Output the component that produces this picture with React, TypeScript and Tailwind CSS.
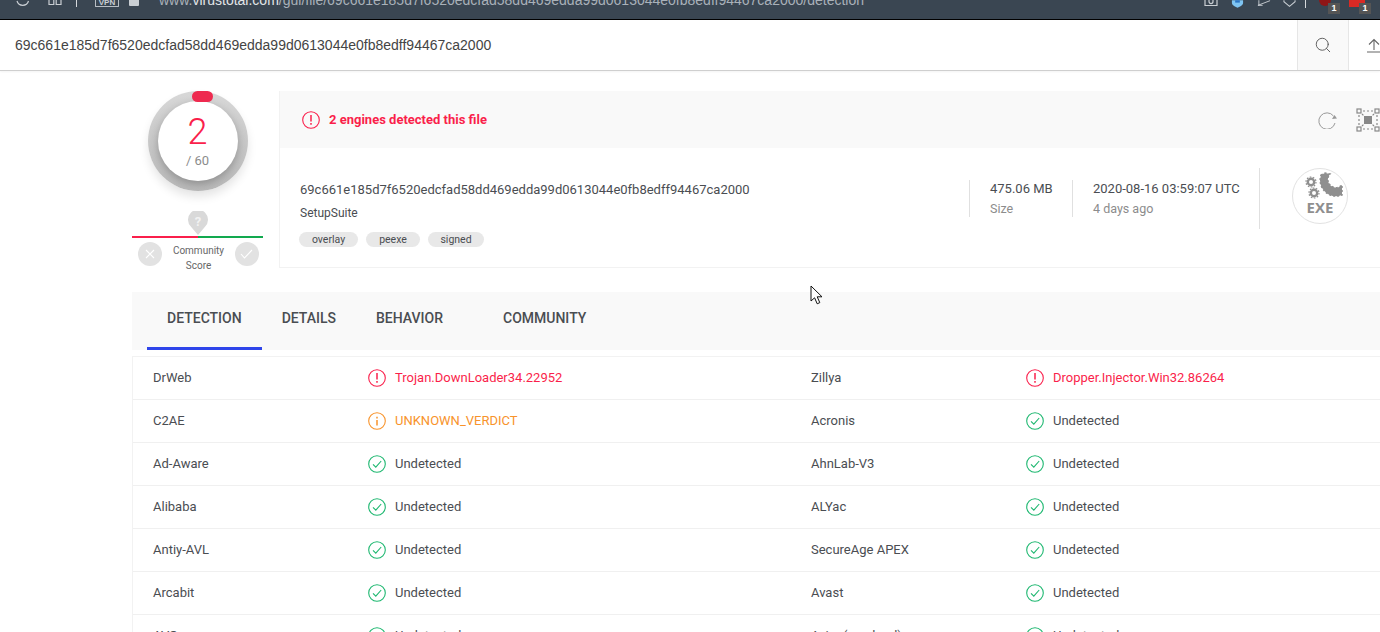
import React from "react";
import { Search } from "lucide-react";

const rows = [
  ["DrWeb", "bad", "Trojan.DownLoader34.22952", "Zillya", "bad", "Dropper.Injector.Win32.86264"],
  ["C2AE", "warn", "UNKNOWN_VERDICT", "Acronis", "ok", "Undetected"],
  ["Ad-Aware", "ok", "Undetected", "AhnLab-V3", "ok", "Undetected"],
  ["Alibaba", "ok", "Undetected", "ALYac", "ok", "Undetected"],
  ["Antiy-AVL", "ok", "Undetected", "SecureAge APEX", "ok", "Undetected"],
  ["Arcabit", "ok", "Undetected", "Avast", "ok", "Undetected"],
  ["AVG", "ok", "Undetected", "Avira (no cloud)", "ok", "Undetected"],
];

const StatusIcon = ({ kind }: { kind: string }) => {
  if (kind === "ok") {
    return (
      <svg width="18" height="18" viewBox="0 0 18 18" fill="none" className="text-[#1fb871] shrink-0">
        <circle cx="9" cy="9" r="8.3" stroke="currentColor" strokeWidth="1.1" />
        <path d="M5 9.3l2.8 2.9L13.2 6" stroke="currentColor" strokeWidth="1.1" />
      </svg>
    );
  }
  if (kind === "warn") {
    return (
      <svg width="18" height="18" viewBox="0 0 18 18" fill="none" className="text-[#f8932b] shrink-0">
        <circle cx="9" cy="9" r="8.3" stroke="currentColor" strokeWidth="1.1" />
        <path d="M9 8v5.5" stroke="currentColor" strokeWidth="1.5" />
        <path d="M9 4.8v1.6" stroke="currentColor" strokeWidth="1.5" />
      </svg>
    );
  }
  return (
    <svg width="18" height="18" viewBox="0 0 18 18" fill="none" className="text-[#fa1f4b] shrink-0">
      <circle cx="9" cy="9" r="8.3" stroke="currentColor" strokeWidth="1.1" />
      <path d="M9 4v6.5" stroke="currentColor" strokeWidth="1.5" />
      <path d="M9 12v1.7" stroke="currentColor" strokeWidth="1.5" />
    </svg>
  );
};

const Result = ({ kind, text }: { kind: string; text: string }) => (
  <div className="flex items-center gap-[9px]">
    <StatusIcon kind={kind} />
    <span
      className={
        kind === "bad" ? "text-[#fa1f4b]" : kind === "warn" ? "text-[#f8932b]" : "text-[#4a4d52]"
      }
    >
      {text}
    </span>
  </div>
);

const BrowserBar = () => (
  <div className="h-5 shrink-0 bg-[#3a4652] border-b border-black overflow-hidden flex items-start text-[#c9ced3]">
    <div className="w-[159px] shrink-0 flex items-start">
      <svg width="14" height="7" viewBox="0 0 14 7" fill="none" className="ml-[16px]">
        <path d="M12.5 1A6 6 0 0 1 1 1" stroke="currentColor" strokeWidth="1.2" />
      </svg>
      <svg width="14" height="6" viewBox="0 0 14 6" fill="none" className="ml-[18px]">
        <path d="M1 0v4.5h4.8V0M8.2 0v4.5H13V0" stroke="currentColor" strokeWidth="1.2" />
      </svg>
      <div className="ml-[14px] w-px h-[7px] bg-[#d5d8db]" />
      <div className="ml-[18px] w-6 h-[7px] border border-t-0 border-[#b8bec4] rounded-b-[1px] flex items-end justify-center overflow-hidden">
        <span className="text-[8px] leading-[7px] font-bold text-[#c9ced3] font-['Liberation_Sans',sans-serif]">VPN</span>
      </div>
      <div className="ml-[10px] w-[10px] h-[6px] bg-[#c9ced3] rounded-b-[1px]" />
    </div>
    <div className="mt-[-8px] whitespace-nowrap text-[14px] leading-4 font-['Liberation_Sans',sans-serif] text-[#a9b1b9]">
      www.<span className="text-[#e2e5e8]">virustotal.com</span>/gui/file/69c661e185d7f6520edcfad58dd469edda99d0613044e0fb8edff94467ca2000/detection
    </div>
    <div className="ml-auto flex items-start shrink-0 pr-[9px]">
      <svg width="14" height="7" viewBox="0 0 14 7" fill="none">
        <path d="M1 0v5.5h12V0M5 0v1.6a2 2 0 0 0 4 0V0" stroke="currentColor" strokeWidth="1.2" />
      </svg>
      <svg width="13" height="8" viewBox="0 0 14 8" className="ml-[13px]">
        <path d="M1 0h12v3c0 2-3 4-6 5-3-1-6-3-6-5z" fill="#7ec4f2" />
        <path d="M4.5 0v2.5h5V0" fill="#2a74c4" />
      </svg>
      <svg width="14" height="6" viewBox="0 0 15 6" fill="none" className="ml-[13px]">
        <path d="M1 5.5L14 .5M1 5.5h5M2 0v5.5" stroke="currentColor" strokeWidth="1" />
      </svg>
      <svg width="13" height="7" viewBox="0 0 14 7" fill="none" className="ml-[12px]">
        <path d="M1 0v1.5L7 6.5l6-5V0" stroke="currentColor" strokeWidth="1.1" />
      </svg>
      <div className="ml-[9px] w-px h-2 bg-[#d5d8db]" />
      <div className="ml-[13px] relative w-[21px] h-[14px]">
        <div className="w-[12px] h-[6px] bg-[#8f1616] rounded-b-full" />
        <span className="absolute right-0 top-[3px] bg-[#555] text-white text-[9px] font-bold leading-[11px] w-3 h-[11px] text-center font-['Liberation_Sans',sans-serif]">1</span>
      </div>
      <div className="ml-[9px] relative w-[22px] h-[14px]">
        <div className="w-[16px] h-[7px] bg-[#d92a25]" />
        <span className="absolute right-0 top-[3px] bg-[#555] text-white text-[9px] font-bold leading-[11px] w-3 h-[11px] text-center font-['Liberation_Sans',sans-serif]">1</span>
      </div>
    </div>
  </div>
);

const SearchBar = () => (
  <div className="h-[51px] shrink-0 flex items-stretch bg-white border-b border-[#cfcfcf] shadow-[0_1px_2px_rgba(0,0,0,0.05)]">
    <div className="flex-1 flex items-center pl-[15px] text-[14px] text-[#444] font-['Liberation_Sans',sans-serif]">
      69c661e185d7f6520edcfad58dd469edda99d0613044e0fb8edff94467ca2000
    </div>
    <div className="w-[52px] bg-[#f9f9f9] border-x border-[#e6e6e6] flex items-center justify-center">
      <Search size={18} strokeWidth={1.2} className="text-[#555]" />
    </div>
    <div className="w-[31px] flex items-center pl-[18px] overflow-hidden">
      <svg width="14" height="15" viewBox="0 0 14 15" fill="none" className="shrink-0">
        <path d="M7 12V2M2 6.5L7 1.5l5 5M0 14h14" stroke="#666" strokeWidth="1.1" />
      </svg>
    </div>
  </div>
);

const Gauge = () => (
  <div className="flex justify-center">
    <div className="relative w-[100px] h-[100px] rounded-full bg-gradient-to-b from-[#d8d8d8] to-[#b9b9b9] shadow-[0_6px_10px_rgba(0,0,0,0.1)] flex items-center justify-center">
      <div className="absolute left-[44px] top-0 w-[21px] h-[11px] rounded-full bg-[#ee2a4f]" />
      <div className="w-20 h-20 rounded-full bg-white shadow-[0_3px_8px_rgba(0,0,0,0.25)] flex flex-col items-center pt-[10px]">
        <span className="text-[36px] leading-[42px] font-light text-[#fa1f4b]">2</span>
        <span className="text-[13px] leading-4 text-[#8c8c8c]">/ 60</span>
      </div>
    </div>
  </div>
);

const CommunityScore = () => (
  <div className="mt-[20px]">
    <div className="flex justify-center pl-[1px] h-[25px]">
      <svg width="20" height="25" viewBox="0 0 20 25">
        <path d="M10 24L3.2 16A10 10 0 1 1 16.8 16Z" fill="#d9d9d9" />
        <text x="10" y="15" textAnchor="middle" fontSize="13" fontWeight="700" fill="#f2f2f2" fontFamily="Roboto, sans-serif">?</text>
      </svg>
    </div>
    <div className="flex h-[2px]">
      <div className="w-[66px] bg-[#fa1f4b]" />
      <div className="w-[65px] bg-[#12a94f]" />
    </div>
    <div className="flex items-start justify-between pl-[6px] pr-[4px] mt-[3px]">
      <div className="w-6 h-6 mt-[1px] rounded-full bg-[#e2e2e2] flex items-center justify-center">
        <svg width="10" height="10" viewBox="0 0 10 10" fill="none">
          <path d="M1 1l8 8M9 1l-8 8" stroke="#fff" strokeWidth="1.1" />
        </svg>
      </div>
      <div className="text-[10px] leading-[15px] text-center text-[#666] pt-[2px]">
        Community
        <br />
        Score
      </div>
      <div className="w-6 h-6 mt-[1px] rounded-full bg-[#e2e2e2] flex items-center justify-center">
        <svg width="13" height="10" viewBox="0 0 13 10" fill="none">
          <path d="M1 5l3.5 4L12 1" stroke="#fff" strokeWidth="1.1" />
        </svg>
      </div>
    </div>
  </div>
);

const ExeIcon = () => (
  <div className="w-[56px] h-[56px] rounded-full border border-[#e2e2e2] bg-white flex flex-col items-center overflow-hidden">
    <svg width="46" height="29" viewBox="0 0 46 29" className="mt-[3px] shrink-0">
      <g fill="none" stroke="#8f8f8f">
        <circle cx="14" cy="10" r="3.2" strokeWidth="2.4" />
        <circle cx="14" cy="10" r="5" strokeWidth="1.2" strokeDasharray="1.6 1.5" />
        <circle cx="17" cy="21" r="3.2" strokeWidth="2.4" />
        <circle cx="17" cy="21" r="5" strokeWidth="1.2" strokeDasharray="1.6 1.5" />
      </g>
      <path
        d="M24 3L28 1L33 2A8 8 0 0 0 45 13L45 23A16 16 0 0 1 24 3Z"
        fill="#8f8f8f"
        stroke="#8f8f8f"
        strokeWidth="1.5"
        strokeDasharray="2 2"
      />
    </svg>
    <span className="mt-[-1px] text-[15px] leading-[15px] font-bold text-[#8f8f8f] font-['Open_Sans',sans-serif]">EXE</span>
  </div>
);

const FileCard = () => (
  <div className="flex-1 min-w-0 border-l border-b border-[#f2f2f2] h-[177px] overflow-hidden">
    <div className="h-[57px] bg-[#f9f9f9] flex items-center pl-[22px]">
      <StatusIcon kind="bad" />
      <span className="ml-[9px] text-[13px] font-bold text-[#fa1f4b]">2 engines detected this file</span>
      <svg width="22" height="18" viewBox="0 0 22 18" fill="none" className="ml-auto mr-[18px]">
        <path d="M19 12A8.2 8.2 0 1 1 17.5 5" stroke="#999" strokeWidth="1" />
        <path d="M21 7.5l-5 .5 2.5-4" fill="#999" />
      </svg>
      <svg width="24" height="24" viewBox="0 0 24 24" fill="none" className="shrink-0">
        <g stroke="#888" strokeWidth="1.2">
          <rect x="1" y="1" width="4" height="4" />
          <rect x="19" y="1" width="4" height="4" />
          <rect x="1" y="19" width="4" height="4" />
          <rect x="19" y="19" width="4" height="4" />
          <path d="M7 3h10M7 21h10M3 7v10M21 7v10M6 6l3 3M18 6l-3 3M6 18l3-3M18 18l-3-3" strokeDasharray="2 2" />
        </g>
        <rect x="8" y="8" width="8" height="8" fill="#888" />
      </svg>
    </div>
    <div className="flex h-[120px] pl-5 text-[13px] text-[#4a4d52]">
      <div className="w-[669px] shrink-0 pt-[34px]">
        <div className="leading-4">69c661e185d7f6520edcfad58dd469edda99d0613044e0fb8edff94467ca2000</div>
        <div className="leading-4 mt-[7px] text-[12px]">SetupSuite</div>
        <div className="flex gap-[8px] mt-[11px] -ml-[1px]">
          <span className="h-[15px] w-[59px] rounded-full bg-[#e8e8e8] text-[10.5px] leading-[15px] text-center">overlay</span>
          <span className="h-[15px] w-[54px] rounded-full bg-[#e8e8e8] text-[10.5px] leading-[15px] text-center">peexe</span>
          <span className="h-[15px] w-[56px] rounded-full bg-[#e8e8e8] text-[10.5px] leading-[15px] text-center">signed</span>
        </div>
      </div>
      <div className="w-[103px] shrink-0 mt-[32px] h-[37px] border-l border-[#e0e0e0] pl-5">
        <div className="leading-[18px]">475.06 MB</div>
        <div className="leading-[18px] mt-[2px] text-[12.5px] text-[#8c8c8c]">Size</div>
      </div>
      <div className="w-[187px] shrink-0 mt-[32px] h-[37px] border-l border-[#e0e0e0] pl-5 whitespace-nowrap">
        <div className="leading-[18px]">2020-08-16 03:59:07 UTC</div>
        <div className="leading-[18px] mt-[2px] text-[12.5px] text-[#8c8c8c]">4 days ago</div>
      </div>
      <div className="mt-5 h-[61px] border-l border-[#e0e0e0] pl-[32px]">
        <ExeIcon />
      </div>
    </div>
  </div>
);

const Tabs = () => (
  <div className="mt-[19px] h-[58px] bg-[#f9f9f9] flex pl-[15px] text-[14px] font-medium text-[#4a4d52]">
    <div className="h-full px-5 pt-4 leading-5 border-b-[3px] border-[#2f45ea]">DETECTION</div>
    <div className="h-full px-5 pt-4 leading-5">DETAILS</div>
    <div className="h-full px-5 pt-4 leading-5">BEHAVIOR</div>
    <div className="h-full ml-5 px-5 pt-4 leading-5">COMMUNITY</div>
  </div>
);

const DetectionTable = () => (
  <div className="mt-[6px] border-l border-t border-[#f2f2f2] text-[13px] text-[#4a4d52]">
    {rows.map((r) => (
      <div key={r[0]} className="h-[43px] flex items-center border-b border-[#f0f0f0]">
        <div className="w-[235px] pl-5 shrink-0">{r[0]}</div>
        <div className="w-[443px] shrink-0">
          <Result kind={r[1]} text={r[2]} />
        </div>
        <div className="w-[215px] shrink-0">{r[3]}</div>
        <Result kind={r[4]} text={r[5]} />
      </div>
    ))}
  </div>
);

export default function App() {
  return (
    <div className="relative w-[1380px] h-[632px] overflow-hidden bg-white flex flex-col font-['Roboto',sans-serif]">
      <BrowserBar />
      <SearchBar />
      <div className="pl-[132px] pt-5">
        <div className="flex items-start">
          <div className="w-[131px] shrink-0">
            <Gauge />
            <CommunityScore />
          </div>
          <div className="w-4 shrink-0" />
          <FileCard />
        </div>
        <Tabs />
        <DetectionTable />
      </div>
      <svg width="14" height="21" viewBox="0 0 14 21" className="absolute left-[810px] top-[285px]">
        <path d="M1 1v15l3.6-3.2 2.6 6 2.6-1.2-2.6-5.8H12Z" fill="#fff" stroke="#111" strokeWidth="1" />
      </svg>
    </div>
  );
}
